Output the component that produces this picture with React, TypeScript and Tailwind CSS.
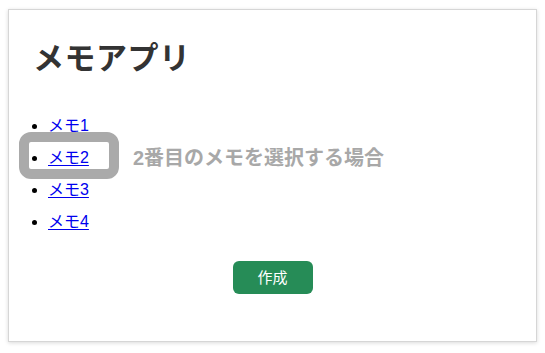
const memos = ["メモ1", "メモ2", "メモ3", "メモ4"];

export default function App() {
  return (
    <div
      className="p-2 bg-white min-h-screen"
      style={{ fontFamily: '"Noto Sans CJK JP", "Noto Sans", sans-serif' }}
    >
      <div className="mt-px h-[333px] border border-[#d6d6d6] shadow-[0_1px_4px_rgba(0,0,0,0.15)] bg-white px-6 pt-[28px]">
        {/* タイトル */}
        <h1 className="text-[31px] leading-[36px] font-bold text-[#333] tracking-[0.5px]">メモアプリ</h1>

        {/* メモ一覧 */}
        <ul className="mt-[36px] list-disc pl-[15px] text-[16px] leading-[32px] font-['Liberation_Sans','Noto_Sans_CJK_JP',sans-serif]">
          {memos.map((memo, i) => (
            <li key={memo} className="relative">
              {i === 1 && (
                <span className="absolute left-[-29px] top-[-10px] w-[100px] h-[47px] border-[10px] border-[#aaaaaa] rounded-[12px] pointer-events-none" />
              )}
              <a href="#" className="text-[#0000ee] underline underline-offset-2">
                {memo}
              </a>
              {i === 1 && (
                <span className="absolute left-[85px] top-0 whitespace-nowrap text-[20px] font-bold text-[#a8a8a8]">
                  2番目のメモを選択する場合
                </span>
              )}
            </li>
          ))}
        </ul>

        <div className="mt-[23px] flex justify-center">
          <button className="w-20 h-[33px] rounded-md bg-[#268c57] text-white text-[15px]">作成</button>
        </div>
      </div>
    </div>
  );
}
